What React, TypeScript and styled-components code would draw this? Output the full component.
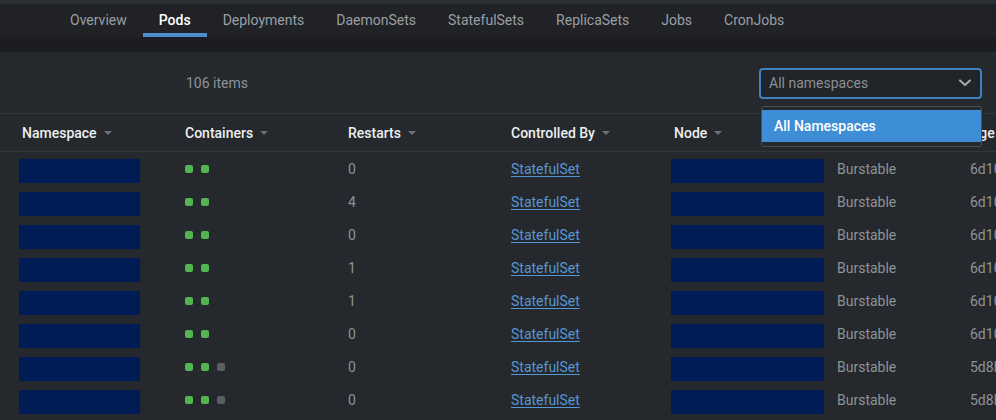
import React from "react";
import styled, { createGlobalStyle } from "styled-components";

const Global = createGlobalStyle`
  html, body { margin: 0; padding: 0; background: #25282c; }
  body { font-family: Roboto, "Noto Sans", "Liberation Sans", sans-serif; overflow: hidden; width: 996px; height: 420px; }
  * { box-sizing: border-box; }
`;

const Page = styled.div`
  width: 996px;
  height: 420px;
  overflow: hidden;
  background: #25282c;
  display: flex;
  flex-direction: column;
`;

const TopStrip = styled.div`
  height: 4px;
  background: #2b2e32;
`;

const TabBar = styled.nav`
  height: 33px;
  background: #202226;
  display: flex;
  padding-left: 54px;
`;

const Tab = styled.div<{ $active?: boolean }>`
  height: 33px;
  padding: 4px 16px 1px 16px;
  display: flex;
  align-items: center;
  font-size: 14px;
  font-weight: ${(p) => (p.$active ? 500 : 400)};
  color: ${(p) => (p.$active ? "#ffffff" : "#9a9fa5")};
  border-bottom: 4px solid ${(p) => (p.$active ? "#4b8fcf" : "transparent")};
  white-space: nowrap;
`;

const Band = styled.div`
  height: 15px;
  background: #1b1d20;
`;

const Toolbar = styled.div`
  height: 62px;
  display: flex;
  align-items: center;
  padding-left: 186px;
  padding-right: 14px;
  padding-top: 1px;
  border-bottom: 1px solid #32363b;
`;

const Count = styled.span`
  font-size: 14px;
  color: #8e9399;
  flex: 1;
`;

const SelectWrap = styled.div`
  position: relative;
  width: 223px;
`;

const SelectBox = styled.div`
  height: 31px;
  border: 2px solid #3f80bd;
  border-radius: 4px;
  background: #212428;
  display: flex;
  align-items: center;
  justify-content: space-between;
  padding: 0 8px;
  font-size: 14px;
  color: #8b9096;
`;

const Menu = styled.div`
  position: absolute;
  top: 38px;
  left: 2px;
  width: 221px;
  height: 41px;
  border: 1px solid #4b4f55;
  border-radius: 3px;
  background: #25282c;
  padding: 3px 0 4px 0;
  z-index: 5;
`;

const MenuItem = styled.div`
  height: 32px;
  background: #3d8ed5;
  color: #ffffff;
  font-size: 14px;
  font-weight: 500;
  display: flex;
  align-items: center;
  padding-left: 12px;
`;

const Table = styled.div`
  display: flex;
  flex-direction: column;
  padding-left: 19px;
`;

const Grid = styled.div<{ $header?: boolean }>`
  display: grid;
  grid-template-columns: 163px 163px 163px 163px 163px 133px 1fr;
  align-items: center;
  height: ${(p) => (p.$header ? "38px" : "33px")};
  ${(p) => (p.$header ? "border-bottom: 1px solid #32363b; margin-left: -19px; padding-left: 19px;" : "")}
`;

const HeadCell = styled.div`
  display: flex;
  align-items: center;
  gap: 7px;
  padding-left: 3px;
  font-size: 14px;
  font-weight: 500;
  color: #eceef0;
  white-space: nowrap;
`;

const Caret = styled.span`
  width: 0;
  height: 0;
  border-left: 4.5px solid transparent;
  border-right: 4.5px solid transparent;
  border-top: 4.5px solid #6c7177;
  margin-top: 1px;
`;

const Cell = styled.div`
  padding-left: 3px;
  font-size: 14px;
  color: #8e9399;
  white-space: nowrap;
  overflow: hidden;
  display: flex;
  align-items: center;
`;

const Redacted = styled.div<{ $w: number }>`
  width: ${(p) => p.$w}px;
  height: 24px;
  margin-left: -3px;
  margin-top: 4px;
  background: #001c56;
`;

const Dots = styled.div`
  display: flex;
  gap: 8px;
  margin-top: 1px;
`;

const Dot = styled.span<{ $on: boolean }>`
  width: 8px;
  height: 8px;
  border-radius: 2px;
  background: ${(p) => (p.$on ? "#52b552" : "#5b5f64")};
`;

const Link = styled.a`
  color: #5597d3;
  text-decoration: underline;
  text-underline-offset: 2px;
  font-size: 14px;
`;

const Chevron = () => (
  <svg width="14" height="10" viewBox="0 0 14 10" fill="none">
    <path d="M2 2.5 L7 7 L12 2.5" stroke="#a0a5ab" strokeWidth="2.2" strokeLinecap="round" strokeLinejoin="round" />
  </svg>
);

const tabs = ["Overview", "Pods", "Deployments", "DaemonSets", "StatefulSets", "ReplicaSets", "Jobs", "CronJobs"];
const headers = ["Namespace", "Containers", "Restarts", "Controlled By", "Node", "QoS", "Age"];

const rows = [
  { restarts: 0, dots: [true, true], age: "6d10h" },
  { restarts: 4, dots: [true, true], age: "6d10h" },
  { restarts: 0, dots: [true, true], age: "6d10h" },
  { restarts: 1, dots: [true, true], age: "6d10h" },
  { restarts: 1, dots: [true, true], age: "6d10h" },
  { restarts: 0, dots: [true, true], age: "6d10h" },
  { restarts: 0, dots: [true, true, false], age: "5d8h" },
  { restarts: 0, dots: [true, true, false], age: "5d8h" },
];

export default function App() {
  return (
    <Page>
      <Global />
      <TopStrip />
      <TabBar>
        {tabs.map((t) => (
          <Tab key={t} $active={t === "Pods"}>
            {t}
          </Tab>
        ))}
      </TabBar>
      <Band />
      <Toolbar>
        <Count>106 items</Count>
        <SelectWrap>
          <SelectBox>
            <span>All namespaces</span>
            <Chevron />
          </SelectBox>
          <Menu>
            <MenuItem>All Namespaces</MenuItem>
          </Menu>
        </SelectWrap>
      </Toolbar>
      <Table>
        <Grid $header>
          {headers.map((h) => (
            <HeadCell key={h}>
              {h}
              {h !== "Age" && h !== "QoS" && <Caret />}
            </HeadCell>
          ))}
        </Grid>
        {rows.map((r, i) => (
          <Grid key={i}>
            <Cell>
              <Redacted $w={121} />
            </Cell>
            <Cell>
              <Dots>
                {r.dots.map((d, j) => (
                  <Dot key={j} $on={d} />
                ))}
              </Dots>
            </Cell>
            <Cell>{r.restarts}</Cell>
            <Cell>
              <Link>StatefulSet</Link>
            </Cell>
            <Cell>
              <Redacted $w={153} />
            </Cell>
            <Cell>Burstable</Cell>
            <Cell>{r.age}</Cell>
          </Grid>
        ))}
      </Table>
    </Page>
  );
}
